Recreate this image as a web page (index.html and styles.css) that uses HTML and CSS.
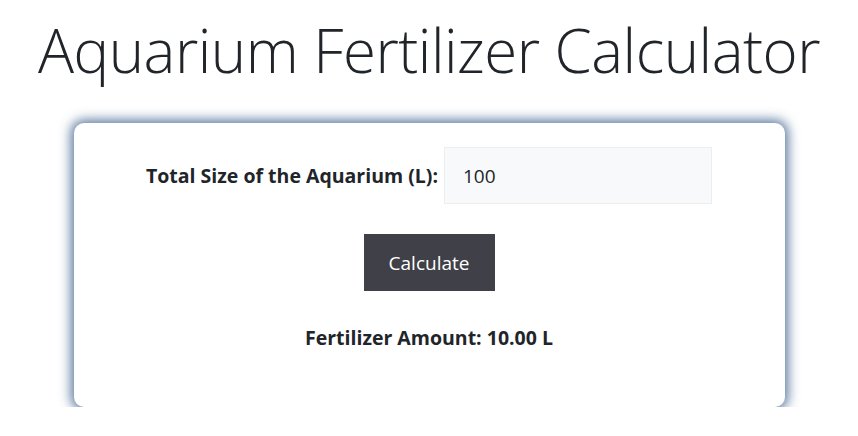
FILE: index.html
```html
<!DOCTYPE html>
<html>
<head>
<meta charset="utf-8">
<link rel="stylesheet" href="styles.css">
</head>
<body>
<h1 class="title">Aquarium Fertilizer Calculator</h1>
<div class="card">
  <div class="row">
    <label class="label" for="size">Total Size of the Aquarium (L):</label>
    <input class="input" id="size" type="text" value="100">
  </div>
  <button class="btn">Calculate</button>
  <p class="result">Fertilizer Amount: 10.00 L</p>
</div>
</body>
</html>
```
FILE: styles.css
```css
html, body {
  margin: 0;
  padding: 0;
  background: #ffffff;
  font-family: "Open Sans", "Noto Sans", sans-serif;
  color: #212529;
}
.title {
  margin: 14px 0 0 0;
  text-align: center;
  font-weight: 300;
  font-size: 60px;
  line-height: 72px;
  letter-spacing: -0.5px;
}
.card {
  width: 711px;
  height: 284px;
  box-sizing: border-box;
  margin: 37px auto 0 auto;
  background: #fff;
  border-radius: 10px;
  box-shadow: 0 0 12px 3px rgba(60, 95, 140, 0.85);
  padding-top: 24px;
  display: flex;
  flex-direction: column;
  align-items: center;
}
.row {
  display: flex;
  align-items: center;
  gap: 6px;
}
.label {
  font-weight: 700;
  font-size: 19.5px;
}
.input {
  width: 268px;
  height: 57px;
  box-sizing: border-box;
  background: #f8f9fa;
  border: 1px solid #eceef0;
  padding: 0 18px;
  font-family: inherit;
  font-size: 19px;
  color: #212529;
  outline: none;
}
.btn {
  margin-top: 30px;
  width: 131px;
  height: 57px;
  background: #404048;
  color: #fff;
  border: none;
  font-family: inherit;
  font-size: 19px;
}
.result {
  margin: 33px 0 0 0;
  font-weight: 700;
  font-size: 19.5px;
}
```
